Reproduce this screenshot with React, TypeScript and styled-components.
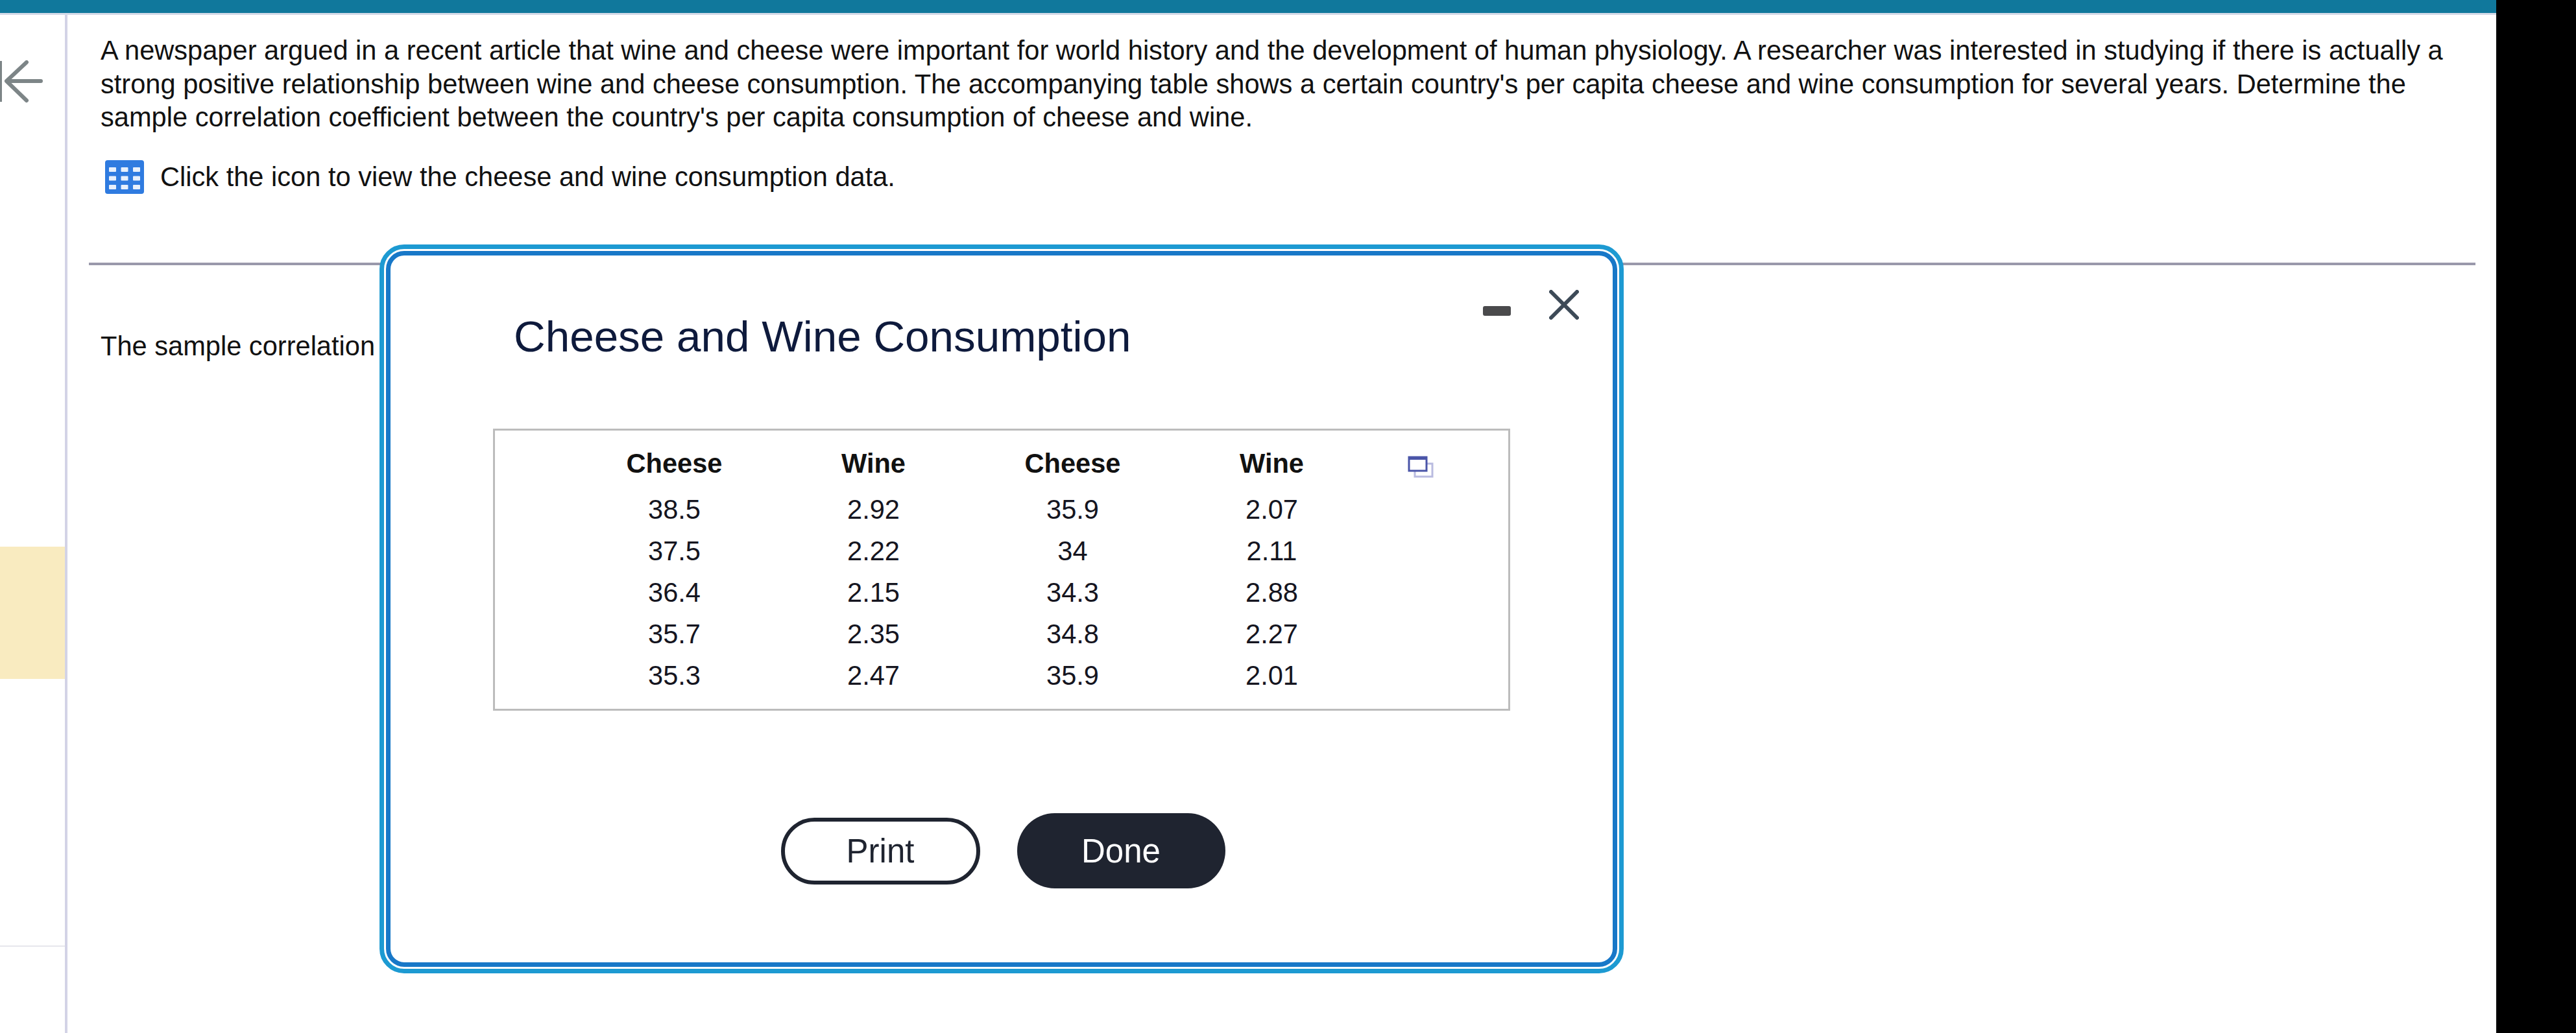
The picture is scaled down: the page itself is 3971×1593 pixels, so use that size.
import { createGlobalStyle } from "styled-components";
import styled from "styled-components";

const GlobalStyle = createGlobalStyle`
  html, body {
    margin: 0;
    padding: 0;
    background: #000000;
  }
  * {
    box-sizing: border-box;
  }
`;

const Page = styled.div`
  position: relative;
  width: 3848px;
  height: 1593px;
  display: flex;
  flex-direction: column;
  background: #ffffff;
  font-family: "Liberation Sans", Arial, sans-serif;
  color: #111111;
  overflow: hidden;
`;

const TopBar = styled.div`
  height: 23px;
  flex: none;
  background: #10789c;
  border-bottom: 3px solid #d5dbe8;
`;

const Main = styled.div`
  flex: 1;
  display: flex;
`;

const Sidebar = styled.div`
  width: 104px;
  flex: none;
  display: flex;
  flex-direction: column;
  border-right: 4px solid #d3d3e6;
`;

const BackButton = styled.div`
  height: 820px;
  padding-top: 70px;
  line-height: 0;
`;

const Highlight = styled.div`
  height: 204px;
  background: #f9ebc0;
`;

const SidebarRule = styled.div`
  margin-top: 411px;
  height: 2px;
  background: #e6e6ec;
`;

const Content = styled.div`
  flex: 1;
  padding: 29px 32px 0 33px;
`;

const Question = styled.p`
  margin: 0 0 0 18px;
  font-size: 41.6px;
  line-height: 51.5px;
`;

const DataLink = styled.div`
  display: flex;
  align-items: center;
  gap: 25px;
  margin: 40px 0 0 25px;
  font-size: 41.6px;
  line-height: 52px;
`;

const Divider = styled.div`
  margin-top: 106px;
  height: 4px;
  background: #9a99ab;
`;

const Answer = styled.div`
  margin: 99px 0 0 18px;
  font-size: 41.6px;
  line-height: 52px;
`;

const ModalFrame = styled.div`
  position: absolute;
  left: 585px;
  top: 377px;
  width: 1918px;
  height: 1124px;
  padding: 3px;
  background: #ffffff;
  border: 7px solid #1d9ad2;
  border-radius: 38px;
`;

const ModalBody = styled.div`
  height: 100%;
  display: flex;
  flex-direction: column;
  align-items: center;
  background: #ffffff;
  border: 7px solid #1878c8;
  border-radius: 28px;
`;

const ModalHeader = styled.div`
  align-self: stretch;
  display: flex;
  align-items: flex-start;
  justify-content: space-between;
  height: 267px;
  padding: 0 52px 0 190px;
`;

const ModalTitle = styled.h2`
  margin: 86px 0 0;
  font-size: 67.4px;
  font-weight: 400;
  color: #0e1a3c;
`;

const WindowControls = styled.div`
  display: flex;
  align-items: center;
  gap: 59px;
  margin-top: 53px;
`;

const MinimizeBar = styled.div`
  width: 43px;
  height: 15px;
  margin-top: 18px;
  border-radius: 3px;
  background: #4a4a4c;
`;

const TableBox = styled.div`
  position: relative;
  width: 1568px;
  height: 435px;
  padding: 24px 0 0 123px;
  border: 3px solid #bcbcbc;
`;

const DataTable = styled.table`
  border-collapse: collapse;
  table-layout: fixed;
  width: 1228px;
  font-size: 41.6px;
`;

const HeadCell = styled.th`
  height: 66px;
  padding: 0 0 12px;
  font-weight: 700;
  text-align: center;
  color: #111111;
`;

const Cell = styled.td`
  height: 64px;
  padding: 0;
  text-align: center;
  color: #15151f;
`;

const CopyIcon = styled.svg`
  position: absolute;
  right: 115px;
  top: 39px;
`;

const ButtonRow = styled.div`
  display: flex;
  align-items: center;
  gap: 57px;
  margin: 158px 0 0 4px;
`;

const PillButton = styled.button<{ $primary?: boolean }>`
  width: ${(p) => (p.$primary ? "321px" : "307px")};
  height: ${(p) => (p.$primary ? "116px" : "103px")};
  border: ${(p) => (p.$primary ? "none" : "6px solid #1f2430")};
  border-radius: 58px;
  background: ${(p) => (p.$primary ? "#1f2430" : "#ffffff")};
  color: ${(p) => (p.$primary ? "#ffffff" : "#1f2430")};
  font-family: inherit;
  font-size: 51px;
  padding: 0;
`;

const rows = [
  ["38.5", "2.92", "35.9", "2.07"],
  ["37.5", "2.22", "34", "2.11"],
  ["36.4", "2.15", "34.3", "2.88"],
  ["35.7", "2.35", "34.8", "2.27"],
  ["35.3", "2.47", "35.9", "2.01"],
];

const BackArrow = () => (
  <svg width="70" height="70" viewBox="0 0 70 70" fill="none">
    <path d="M1 1V64" stroke="#7d8587" strokeWidth="4" />
    <path
      d="M41 3L10 32L41 62M10 32H63"
      stroke="#7d8587"
      strokeWidth="6"
      strokeLinecap="round"
      strokeLinejoin="round"
    />
  </svg>
);

const GridIcon = () => (
  <svg width="60" height="52" viewBox="0 0 60 52">
    <rect width="60" height="52" rx="4" fill="#2f7be0" />
    {[0, 1, 2].map((row) =>
      [0, 1, 2].map((col) => (
        <rect
          key={`${row}-${col}`}
          x={6 + col * 18.5}
          y={11 + row * 13.5}
          width="11"
          height="7"
          rx="1"
          fill="#e8f0fc"
        />
      ))
    )}
  </svg>
);

const CloseIcon = () => (
  <svg width="46" height="46" viewBox="0 0 46 46" fill="none">
    <path
      d="M3 3L43 43M43 3L3 43"
      stroke="#3d4a57"
      strokeWidth="6"
      strokeLinecap="round"
    />
  </svg>
);

const App = () => {
  return (
    <>
      <GlobalStyle />
      <Page>
        <TopBar />
        <Main>
          <Sidebar>
            <BackButton>
              <BackArrow />
            </BackButton>
            <Highlight />
            <SidebarRule />
          </Sidebar>
          <Content>
            <Question>
              A newspaper argued in a recent article that wine and cheese were
              important for world history and the development of human
              physiology. A researcher was interested in studying if there is
              actually a strong positive relationship between wine and cheese
              consumption. The accompanying table shows a certain country's per
              capita cheese and wine consumption for several years. Determine
              the sample correlation coefficient between the country's per
              capita consumption of cheese and wine.
            </Question>
            <DataLink>
              <GridIcon />
              Click the icon to view the cheese and wine consumption data.
            </DataLink>
            <Divider />
            <Answer>The sample correlation</Answer>
          </Content>
        </Main>
        <ModalFrame>
          <ModalBody>
            <ModalHeader>
              <ModalTitle>Cheese and Wine Consumption</ModalTitle>
              <WindowControls>
                <MinimizeBar />
                <CloseIcon />
              </WindowControls>
            </ModalHeader>
            <TableBox>
              <DataTable>
                <thead>
                  <tr>
                    <HeadCell>Cheese</HeadCell>
                    <HeadCell>Wine</HeadCell>
                    <HeadCell>Cheese</HeadCell>
                    <HeadCell>Wine</HeadCell>
                  </tr>
                </thead>
                <tbody>
                  {rows.map((row, i) => (
                    <tr key={i}>
                      {row.map((value, j) => (
                        <Cell key={j}>{value}</Cell>
                      ))}
                    </tr>
                  ))}
                </tbody>
              </DataTable>
              <CopyIcon width="40" height="34" viewBox="0 0 40 34" fill="none">
                <rect x="11" y="12" width="27" height="20" stroke="#b9bbe0" strokeWidth="3" />
                <rect x="2" y="2" width="27" height="21" fill="#ffffff" stroke="#4a55a8" strokeWidth="3" />
                <path d="M2 4H29" stroke="#4a55a8" strokeWidth="4" />
              </CopyIcon>
            </TableBox>
            <ButtonRow>
              <PillButton>Print</PillButton>
              <PillButton $primary>Done</PillButton>
            </ButtonRow>
          </ModalBody>
        </ModalFrame>
      </Page>
    </>
  );
};

export default App;
